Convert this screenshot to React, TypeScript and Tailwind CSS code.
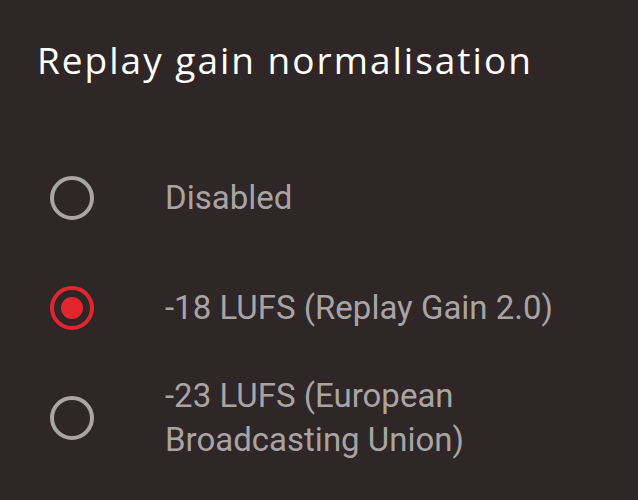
import { useState } from "react";

const options = [
  { id: "off", label: "Disabled" },
  { id: "rg2", label: "-18 LUFS (Replay Gain 2.0)" },
  { id: "ebu", label: "-23 LUFS (European Broadcasting Union)" },
];

// Radio circle, red when picked
const Radio = ({ checked }: { checked: boolean }) => (
  <div
    className={`flex h-[44px] w-[44px] shrink-0 items-center justify-center rounded-full border-[4px] ${
      checked ? "border-[#e3262d]" : "border-[#a9a5a5]"
    }`}
  >
    {checked && <div className="h-[22px] w-[22px] rounded-full bg-[#e3262d]" />}
  </div>
);

export default function App() {
  const [value, setValue] = useState("rg2");

  return (
    <div className="h-[500px] w-full overflow-hidden bg-[#2e2627]">
      <h1
        className="pl-[37px] pt-[37px] text-[37px] leading-[46px] font-medium tracking-[2px] text-white"
        style={{ fontFamily: '"Open Sans", sans-serif' }}
      >
        Replay gain normalisation
      </h1>

      <div className="mt-[60px] flex flex-col">
        {options.map((o) => (
          <button
            key={o.id}
            onClick={() => setValue(o.id)}
            className="flex min-h-[110px] items-center text-left"
          >
            <div className="pl-[50px]">
              <Radio checked={value === o.id} />
            </div>
            <span
              className="ml-[71px] max-w-[400px] text-[33px] leading-[44px] text-[#a8a4a4]"
              style={{ fontFamily: "Roboto, sans-serif" }}
            >
              {o.label}
            </span>
          </button>
        ))}
      </div>
    </div>
  );
}
